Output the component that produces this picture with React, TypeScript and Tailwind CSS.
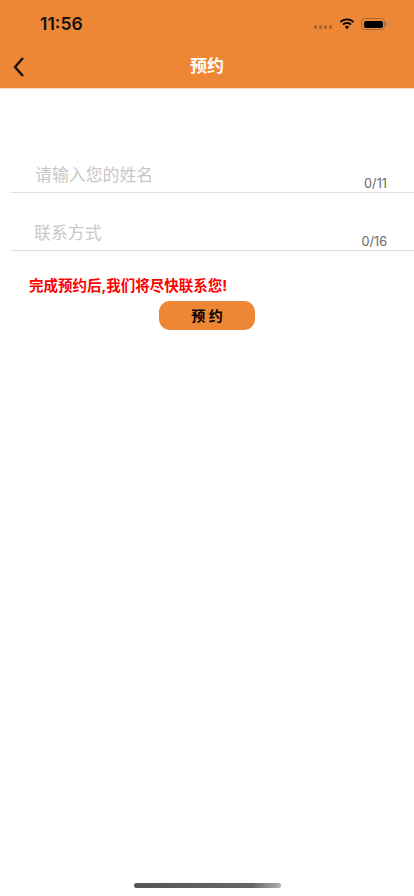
import React from 'react';

const cjk = "font-['Inter','Noto_Sans_CJK_SC',sans-serif]";

function Field({ placeholder, count, inputClass, countClass }: { placeholder: string; count: string; inputClass: string; countClass: string }) {
  return (
    <div className="ml-[11px] h-[46px] flex items-end justify-between border-b border-[#dedede]">
      <input
        readOnly
        placeholder={placeholder}
        className={`w-[200px] h-[24px] mb-[4px] bg-transparent text-[16.9px] outline-none placeholder:text-[#c8c8c8] ${inputClass}`}
      />
      <span className={`text-[12.7px] leading-[16px] text-[#666666] font-['Inter',sans-serif] ${countClass}`}>{count}</span>
    </div>
  );
}

export default function App() {
  return (
    <div className={`relative w-[414px] h-[896px] bg-white overflow-hidden ${cjk}`}>
      <header className="h-[89px] bg-[#ee8735] border-b border-[#f8d9bf] flex flex-col">
        <div className="h-[45px] pl-[40px] pr-[27px] pt-[3px] flex items-center justify-between">
          <span className="text-[17.5px] font-semibold text-[#111111] font-['Inter',sans-serif]">11:56</span>
          <div className="flex items-center">
            <div className="flex gap-[1.5px] mt-[6px] mr-[7px]">
              <span className="w-[3.5px] h-[3.5px] rounded-full bg-[#a8642c]" />
              <span className="w-[3.5px] h-[3.5px] rounded-full bg-[#a8642c]" />
              <span className="w-[3.5px] h-[3.5px] rounded-full bg-[#a8642c]" />
              <span className="w-[3.5px] h-[3.5px] rounded-full bg-[#a8642c]" />
            </div>
            <svg width="16" height="12" viewBox="0 0 16 12" className="mr-[6px]">
              <path d="M8 2.3c2.3 0 4.4.9 6 2.4l1.2-1.3C13.3 1.5 10.8.4 8 .4S2.7 1.5.8 3.4L2 4.7c1.6-1.5 3.7-2.4 6-2.4z" fill="#000" />
              <path d="M8 5.9c1.3 0 2.5.5 3.4 1.4l1.2-1.3C11.4 4.8 9.8 4.1 8 4.1S4.6 4.8 3.4 6l1.2 1.3C5.5 6.4 6.7 5.9 8 5.9z" fill="#000" />
              <path d="M8 7.8c-.9 0-1.6.3-2.2.9L8 11.2l2.2-2.5c-.6-.6-1.3-.9-2.2-.9z" fill="#000" />
            </svg>
            <div className="w-[24px] h-[12px] rounded-[3.5px] border border-[#a8642c] p-[1.5px]">
              <div className="w-full h-full rounded-[2px] bg-black" />
            </div>
            <span className="w-[1.5px] h-[4px] ml-[0.5px] rounded-r-full bg-[#a8642c]" />
          </div>
        </div>
        <div className="relative h-[43px] flex items-center justify-center">
          <svg width="14" height="22" viewBox="0 0 14 22" className="absolute left-[12px] top-[11px]" fill="none">
            <path d="M11 2 L3 11 L11 20" stroke="#111" strokeWidth="2.4" />
          </svg>
          <h1 className="text-[17px] font-semibold text-white">预约</h1>
        </div>
      </header>

      <main className="pt-[58px]">
        <Field placeholder="请输入您的姓名" count="0/11" inputClass="ml-[24px]" countClass="mr-[27px]" />
        <div className="mt-[12px]">
          <Field placeholder="联系方式" count="0/16" inputClass="ml-[23px]" countClass="mr-[27px]" />
        </div>
        <p className="mt-[25px] ml-[29px] text-[14.5px] leading-[20px] font-bold text-[#ff0000]">完成预约后,我们将尽快联系您!</p>
        <div className="mt-[5px] flex justify-center">
          <button className="w-[96px] h-[29px] rounded-[11px] bg-[#ee8735] text-[14px] font-semibold text-black">预 约</button>
        </div>
      </main>

      <div className="absolute left-[134px] bottom-[8px] w-[147px] h-[5px] rounded-full bg-gradient-to-r from-[#555555] via-[#666666] via-80% to-[#b0b0b0]" />
    </div>
  );
}
